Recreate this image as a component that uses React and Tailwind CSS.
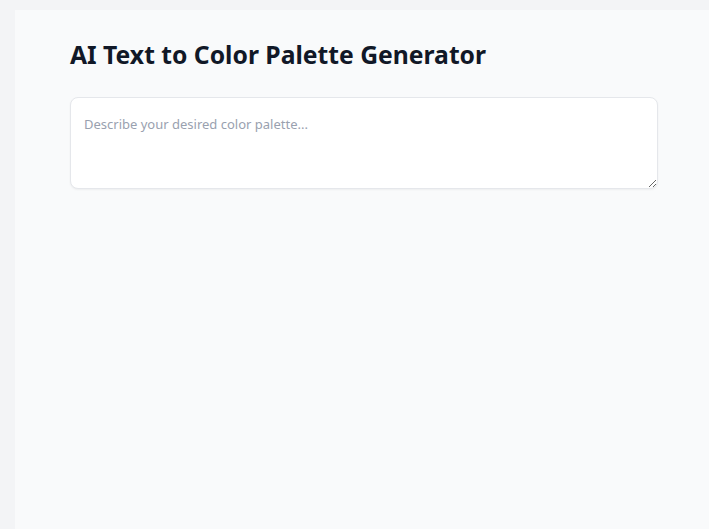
import { useState } from 'react'

export default function App() {
  const [prompt, setPrompt] = useState('')

  return (
    <div className="min-h-screen bg-[#f3f4f6] pl-[15px] pt-[10px] font-['Noto_Sans','Open_Sans',sans-serif]">
      <div className="min-h-[519px] bg-[#f9fafb] pl-[55px] pt-[29px]">
        <h1 className="text-[24.7px] leading-[32px] font-bold text-[#111827]">
          AI Text to Color Palette Generator
        </h1>
        <textarea
          value={prompt}
          onChange={(e) => setPrompt(e.target.value)}
          placeholder="Describe your desired color palette..."
          className="mt-[26px] block w-[588px] h-[92px] rounded-lg border border-gray-200 bg-white pl-[13px] pr-[13px] pt-[16px] pb-[12px] text-[13px] leading-[20px] text-gray-900 placeholder:text-gray-400 shadow-xs outline-none"
        />
      </div>
    </div>
  )
}
